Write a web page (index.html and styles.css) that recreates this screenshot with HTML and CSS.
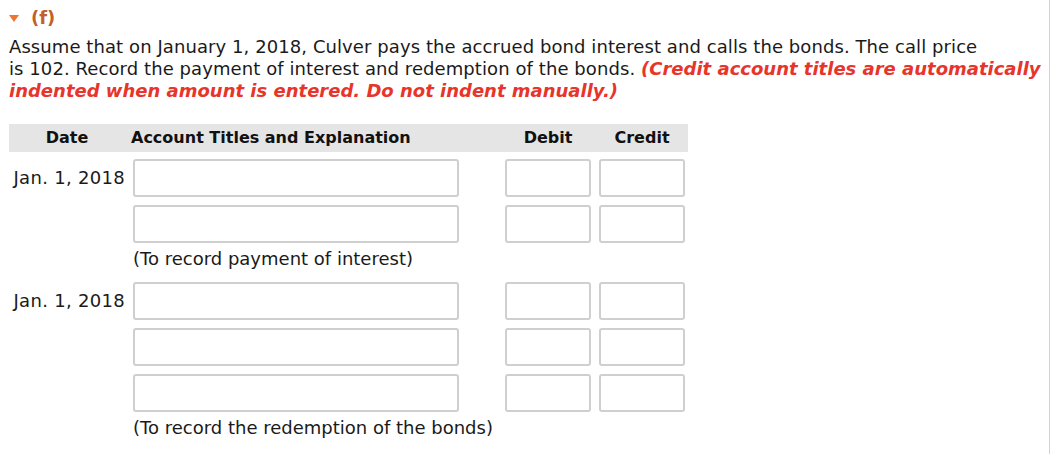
FILE: index.html
```html
<!DOCTYPE html>
<html lang="en">
<head>
    <meta charset="UTF-8">
    <title>Bond redemption entry</title>
    <link rel="stylesheet" href="styles.css">
</head>
<body>
    <div class="page">
        <h3 class="part-title"><span class="toggle"></span>(f)</h3>

        <p class="question">
            Assume that on January 1, 2018, Culver pays the accrued bond interest and calls the bonds. The call price<br>
            is 102. Record the payment of interest and redemption of the bonds. <em class="hint">(Credit account titles are automatically<br>
            indented when amount is entered. Do not indent manually.)</em>
        </p>

        <div class="journal">
            <div class="journal-head">
                <div class="head-date">Date</div>
                <div class="head-account">Account Titles and Explanation</div>
                <div class="head-amount">Debit</div>
                <div class="head-amount">Credit</div>
            </div>

            <div class="entry">
                <div class="line">
                    <div class="date">Jan. 1, 2018</div>
                    <input class="account" type="text">
                    <input class="amount debit" type="text">
                    <input class="amount" type="text">
                </div>
                <div class="line">
                    <div class="date"></div>
                    <input class="account" type="text">
                    <input class="amount debit" type="text">
                    <input class="amount" type="text">
                </div>
                <div class="note">(To record payment of interest)</div>
            </div>

            <div class="entry">
                <div class="line">
                    <div class="date">Jan. 1, 2018</div>
                    <input class="account" type="text">
                    <input class="amount debit" type="text">
                    <input class="amount" type="text">
                </div>
                <div class="line">
                    <div class="date"></div>
                    <input class="account" type="text">
                    <input class="amount debit" type="text">
                    <input class="amount" type="text">
                </div>
                <div class="line">
                    <div class="date"></div>
                    <input class="account" type="text">
                    <input class="amount debit" type="text">
                    <input class="amount" type="text">
                </div>
                <div class="note">(To record the redemption of the bonds)</div>
            </div>
        </div>
    </div>
</body>
</html>
```

FILE: styles.css
```css
* {
    margin: 0;
    padding: 0;
    box-sizing: border-box;
}

body {
    font-family: "DejaVu Sans", Verdana, sans-serif;
    font-size: 18px;
    line-height: 22px;
    color: #1a1a1a;
    background: #fff;
}

.page {
    width: 1050px;
    min-height: 100vh;
    padding: 7px 0 0 9px;
    border-right: 1px solid #cbd3dd;
}

.part-title {
    display: flex;
    align-items: center;
    font-size: 18px;
    font-weight: bold;
    color: #c0612b;
}

.toggle {
    width: 0;
    height: 0;
    margin: 0 12px 0 0;
    border-left: 5.5px solid transparent;
    border-right: 5.5px solid transparent;
    border-top: 7px solid #f07430;
}

.question {
    margin-top: 7px;
    white-space: nowrap;
    letter-spacing: 0.08px;
}

.hint {
    color: #e8352b;
    font-weight: bold;
    font-style: italic;
    letter-spacing: 0;
}

.journal {
    margin-top: 22px;
    width: 679px;
}

.journal-head,
.line {
    display: grid;
    grid-template-columns: 116px 326px 124px 86px;
    column-gap: 8px;
}

.journal-head {
    height: 28px;
    align-items: center;
    background: #e5e5e5;
    font-size: 16px;
    font-weight: bold;
    color: #111;
}

.head-date {
    text-align: center;
}

.head-account {
    margin-left: -2px;
}

.head-amount {
    width: 86px;
    justify-self: end;
    text-align: center;
}

.entry {
    padding-top: 7px;
}

.entry + .entry {
    padding-top: 12px;
}

.line {
    align-items: center;
    margin-bottom: 8px;
}

.date {
    text-align: right;
    letter-spacing: 0.3px;
}

input {
    height: 38px;
    border: 2px solid #cfcfcf;
    border-radius: 3px;
    background: #fff;
    font: inherit;
    padding: 0 6px;
}

.account {
    width: 326px;
}

.amount {
    width: 86px;
}

.debit {
    justify-self: end;
}

.note {
    margin: -3px 0 0 124px;
}
```
